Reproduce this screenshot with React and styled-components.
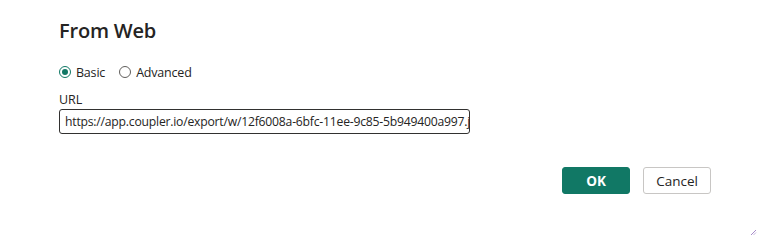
import React from "react";
import styled, { createGlobalStyle } from "styled-components";

const Global = createGlobalStyle`
  html, body { margin: 0; padding: 0; background: #ffffff; }
  body { font-family: "Open Sans", "Noto Sans", sans-serif; color: #252423; }
`;

const Dialog = styled.div`
  position: relative;
  box-sizing: border-box;
  width: 768px;
  height: 237px;
  padding: 17px 57px 0 59px;
  display: flex;
  flex-direction: column;
  background: #fff;
`;

const Title = styled.h1`
  margin: 0;
  font-size: 20px;
  line-height: 28px;
  font-weight: 600;
  color: #252423;
  letter-spacing: -0.2px;
`;

const RadioRow = styled.div`
  display: flex;
  align-items: center;
  gap: 14px;
  margin-top: 17px;
  height: 20px;
`;

const RadioOption = styled.label`
  display: flex;
  align-items: center;
  gap: 5px;
  font-size: 12.5px;
  letter-spacing: -0.2px;
  color: #252423;
`;

const RadioCircle = styled.span`
  box-sizing: border-box;
  width: 12px;
  height: 12px;
  border-radius: 50%;
  border: 1px solid ${(p) => (p.$checked ? "#117865" : "#605e5c")};
  display: flex;
  align-items: center;
  justify-content: center;
  &::after {
    content: "";
    width: 6px;
    height: 6px;
    border-radius: 50%;
    background: ${(p) => (p.$checked ? "#117865" : "transparent")};
  }
`;

const FieldLabel = styled.div`
  margin-top: 9px;
  font-size: 12.5px;
  line-height: 18px;
  color: #252423;
`;

const UrlInput = styled.div`
  box-sizing: border-box;
  width: 411px;
  height: 25px;
  margin-top: 0;
  border: 1px solid #323130;
  border-radius: 3px;
  padding: 0 0 0 5px;
  font-size: 12.2px;
  letter-spacing: -0.22px;
  line-height: 23px;
  white-space: nowrap;
  overflow: hidden;
  color: #252423;
`;

const Footer = styled.div`
  display: flex;
  justify-content: flex-end;
  gap: 13px;
  margin-top: 33px;
`;

const Button = styled.button`
  box-sizing: border-box;
  width: 68px;
  height: 27px;
  border-radius: 3px;
  font-family: inherit;
  font-size: 13.5px;
  padding: 0;
  cursor: pointer;
  font-weight: ${(p) => (p.$primary ? 700 : 400)};
  color: ${(p) => (p.$primary ? "#ffffff" : "#252423")};
  background: ${(p) => (p.$primary ? "#117865" : "#ffffff")};
  border: 1px solid ${(p) => (p.$primary ? "#117865" : "#c8c6c4")};
`;

const Grip = styled.svg`
  position: absolute;
  right: 11px;
  bottom: 1px;
`;

export default function App() {
  return (
    <>
      <Global />
      <Dialog>
        <Title>From Web</Title>
        <RadioRow>
          <RadioOption>
            <RadioCircle $checked />
            Basic
          </RadioOption>
          <RadioOption>
            <RadioCircle />
            Advanced
          </RadioOption>
        </RadioRow>
        <FieldLabel>URL</FieldLabel>
        <UrlInput>https://app.coupler.io/export/w/12f6008a-6bfc-11ee-9c85-5b949400a997.json</UrlInput>
        <Footer>
          <Button $primary>OK</Button>
          <Button>Cancel</Button>
        </Footer>
        <Grip width="7" height="7" viewBox="0 0 7 7">
          <path d="M6 1 L1 6" stroke="#a78bc9" strokeWidth="1" />
          <path d="M6 3.5 L3.5 6" stroke="#c8b8e0" strokeWidth="1" />
        </Grip>
      </Dialog>
    </>
  );
}
